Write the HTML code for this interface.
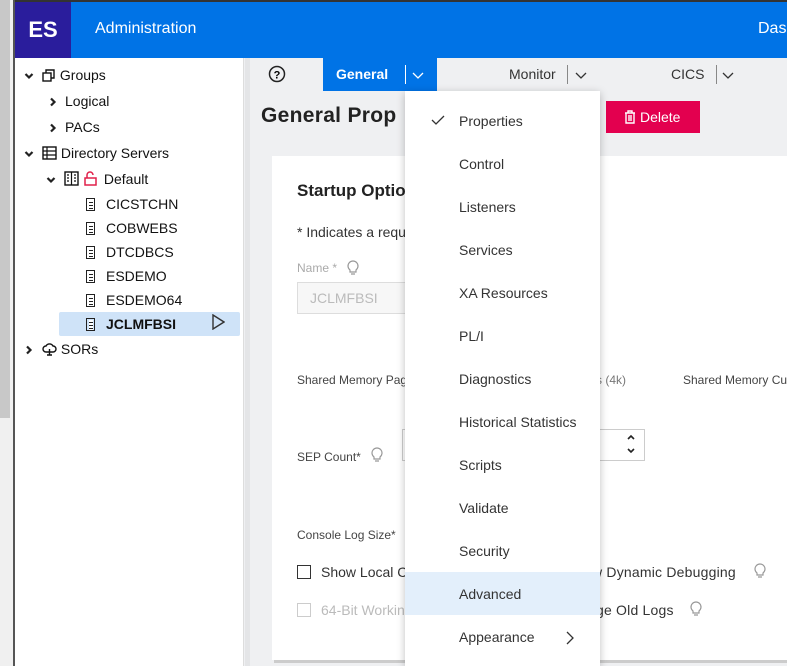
<!DOCTYPE html>
<html><head><style>
*{margin:0;padding:0;box-sizing:border-box}
body{width:787px;height:666px;overflow:hidden;position:relative;font-family:"Liberation Sans",sans-serif;background:#eff0f2;color:#222}
.a{position:absolute}
.tree{font-size:14px;color:#111}
.tree div{position:absolute;white-space:nowrap}
.srv{display:inline-block;width:9px;height:13px;border:1.5px solid #222;vertical-align:-2px;margin-right:11px;background:repeating-linear-gradient(#fff 0 2px,#222 2px 3px);background-size:4px 100%;background-repeat:no-repeat;background-position:2px 1px}
.menu div{position:absolute;left:54px;font-size:14px;color:#333}
.lbl{font-size:12px;color:#444;position:absolute;white-space:nowrap}
</style></head><body>
<div class="a" style="left:0;top:0;width:13px;height:666px;background:#f0f0f0"></div>
<div class="a" style="left:0;top:0;width:10px;height:418px;background:#c8c8c8"></div>
<div class="a" style="left:13px;top:0;width:2px;height:666px;background:#555"></div>
<div class="a" style="left:15px;top:0;width:772px;height:58px;background:#0073e6;border-top:2px solid #333"></div>
<div class="a" style="left:15px;top:2px;width:56px;height:56px;background:#2a1d9c;color:#fff;font-weight:bold;font-size:22px;text-align:center;line-height:56px">ES</div>
<div class="a" style="left:95px;top:20px;color:#fff;font-size:16px">Administration</div>
<div class="a" style="left:758px;top:20px;color:#fff;font-size:16px">Das</div>
<div class="a" style="left:15px;top:58px;width:229px;height:608px;background:#fff;border-right:1px solid #ddd"></div>
<div class="a" style="left:245px;top:58px;width:5px;height:608px;background:#e4e5e7"></div>
<div class="tree">
<svg class="a" style="left:24px;top:72px" width="10" height="8"><path d="M1.5 2l3.5 3.5L8.5 2" fill="none" stroke="#222" stroke-width="2.2"/></svg>
<div style="left:42px;top:67px"><svg width="14" height="14" style="vertical-align:-2px"><rect x="1" y="5" width="8" height="8" fill="none" stroke="#111" stroke-width="1.4"/><path d="M4 5V2h8v8H9" fill="none" stroke="#111" stroke-width="1.4"/></svg> Groups</div>
<svg class="a" style="left:49px;top:97px" width="8" height="10"><path d="M2 1.5l3.5 3.5L2 8.5" fill="none" stroke="#222" stroke-width="2.2"/></svg>
<div style="left:65px;top:93px">Logical</div>
<svg class="a" style="left:49px;top:123px" width="8" height="10"><path d="M2 1.5l3.5 3.5L2 8.5" fill="none" stroke="#222" stroke-width="2.2"/></svg>
<div style="left:65px;top:119px">PACs</div>
<svg class="a" style="left:24px;top:150px" width="10" height="8"><path d="M1.5 2l3.5 3.5L8.5 2" fill="none" stroke="#222" stroke-width="2.2"/></svg>
<div style="left:42px;top:145px"><svg width="15" height="14" style="vertical-align:-2px"><rect x="1" y="1" width="13" height="12" fill="none" stroke="#111" stroke-width="1.4"/><path d="M1 5h13M1 9h13M5 1v12" stroke="#111" stroke-width="1.2"/></svg> Directory Servers</div>
<svg class="a" style="left:46px;top:176px" width="10" height="8"><path d="M1.5 2l3.5 3.5L8.5 2" fill="none" stroke="#222" stroke-width="2.2"/></svg>
<div style="left:64px;top:171px"><svg width="36" height="15" style="vertical-align:-2px"><rect x="1" y="1" width="13" height="13" fill="none" stroke="#111" stroke-width="1.4"/><path d="M7.5 1v13M3 4h2M3 7h2M3 10h2M10 4h2M10 7h2M10 10h2" stroke="#111" stroke-width="1.2"/><rect x="21" y="7" width="11" height="7" fill="none" stroke="#e0204a" stroke-width="1.5"/><path d="M23 7V4a3 3 0 0 1 6 0" fill="none" stroke="#e0204a" stroke-width="1.5"/></svg> Default</div>
<div style="left:86px;top:196px"><span class="srv"></span>CICSTCHN</div>
<div style="left:86px;top:220px"><span class="srv"></span>COBWEBS</div>
<div style="left:86px;top:244px"><span class="srv"></span>DTCDBCS</div>
<div style="left:86px;top:268px"><span class="srv"></span>ESDEMO</div>
<div style="left:86px;top:292px"><span class="srv"></span>ESDEMO64</div>
<div style="left:59px;top:312px;width:181px;height:24px;background:#cfe3f8;border-radius:2px"></div>
<div style="left:86px;top:316px;font-weight:bold"><span class="srv"></span>JCLMFBSI</div>
<div style="left:211px;top:314px"><svg width="14" height="16"><path d="M2 1l11 7-11 7z" fill="none" stroke="#333" stroke-width="1.4"/></svg></div>
<svg class="a" style="left:25px;top:345px" width="8" height="10"><path d="M2 1.5l3.5 3.5L2 8.5" fill="none" stroke="#222" stroke-width="2.2"/></svg>
<div style="left:42px;top:341px"><svg width="15" height="15" style="vertical-align:-2px"><path d="M4 11a3 3 0 0 1 0-6 4 4 0 0 1 7 0 3 3 0 0 1 0 6z M7.5 8v6M5 14h5" fill="none" stroke="#111" stroke-width="1.4"/></svg> SORs</div>
</div>
<div class="a" style="left:268px;top:65px"><svg width="18" height="18"><circle cx="9" cy="9" r="7.5" fill="none" stroke="#222" stroke-width="1.5"/><text x="9" y="13.5" font-size="11" font-weight="bold" text-anchor="middle" font-family="Liberation Sans">?</text></svg></div>
<div class="a" style="left:323px;top:58px;width:114px;height:33px;background:#0073e6"></div>
<div class="a" style="left:336px;top:66px;color:#fff;font-weight:bold;font-size:14px">General</div>
<div class="a" style="left:405px;top:65px;width:1px;height:19px;background:#fff"></div>
<div class="a" style="left:411px;top:67px"><svg width="14" height="10"><path d="M2 3l5 5 5-5" fill="none" stroke="#fff" stroke-width="1.3"/></svg></div>
<div class="a" style="left:509px;top:66px;font-size:14px;color:#333">Monitor</div>
<div class="a" style="left:567px;top:65px;width:1px;height:19px;background:#888"></div>
<div class="a" style="left:574px;top:67px"><svg width="14" height="10"><path d="M2 3l5 5 5-5" fill="none" stroke="#333" stroke-width="1.3"/></svg></div>
<div class="a" style="left:671px;top:66px;font-size:14px;color:#333">CICS</div>
<div class="a" style="left:716px;top:65px;width:1px;height:19px;background:#888"></div>
<div class="a" style="left:721px;top:67px"><svg width="14" height="10"><path d="M2 3l5 5 5-5" fill="none" stroke="#333" stroke-width="1.3"/></svg></div>
<div class="a" style="left:261px;top:104px;font-size:21px;font-weight:bold;color:#222;letter-spacing:0.3px;white-space:nowrap">General Prop</div>
<div class="a" style="left:606px;top:101px;width:94px;height:32px;background:#e3004f;color:#fff;font-size:14px;line-height:32px;padding-left:18px"><svg width="12" height="14" style="vertical-align:-2px;margin-right:4px"><path d="M1 3h10M4 3V1h4v2M2 3v10h8V3M5 5v6M7 5v6" fill="none" stroke="#fff" stroke-width="1.4"/></svg>Delete</div>
<div class="a" style="left:272px;top:156px;width:515px;height:504px;background:#fff"></div>
<div class="a" style="left:274px;top:660px;width:513px;height:3px;background:#ccc"></div>
<div class="a" style="left:297px;top:181px;font-size:17px;font-weight:bold;color:#222;white-space:nowrap">Startup Options</div>
<div class="a" style="left:297px;top:224px;font-size:14px;color:#333;white-space:nowrap">* Indicates a required</div>
<div class="a" style="left:297px;top:261px;font-size:12px;color:#aaa">Name *</div>
<div class="a" style="left:347px;top:259px"><svg width="12" height="17"><path d="M3 11a5 5 0 1 1 6 0v2H3z M4 15h4" fill="none" stroke="#999" stroke-width="1.2"/></svg></div>
<div class="a" style="left:297px;top:282px;width:120px;height:32px;border:1px solid #ddd;background:#f7f7f7;color:#bbb;font-size:14px;line-height:30px;padding-left:12px">JCLMFBSI</div>
<div class="lbl" style="left:297px;top:373px">Shared Memory Pages</div>
<div class="lbl" style="left:596px;top:373px;color:#777">s (4k)</div>
<div class="lbl" style="left:683px;top:373px">Shared Memory Cu</div>
<div class="lbl" style="left:297px;top:450px">SEP Count*</div>
<div class="a" style="left:371px;top:446px"><svg width="12" height="17"><path d="M3 11a5 5 0 1 1 6 0v2H3z M4 15h4" fill="none" stroke="#999" stroke-width="1.2"/></svg></div>
<div class="a" style="left:402px;top:429px;width:243px;height:32px;border:1px solid #ccc"></div>
<svg class="a" style="left:626px;top:434px" width="10" height="24"><path d="M2 5l3-3 3 3M2 15l3 3 3-3" fill="none" stroke="#222" stroke-width="1.6"/></svg>
<div class="lbl" style="left:297px;top:528px">Console Log Size*</div>
<div class="a" style="left:297px;top:565px;width:14px;height:14px;border:1.5px solid #333"></div>
<div class="a" style="left:321px;top:564px;font-size:14px;color:#333">Show Local C</div>
<div class="a" style="left:592px;top:564px;font-size:14px;color:#333;letter-spacing:0.2px">w Dynamic Debugging</div>
<div class="a" style="left:754px;top:562px"><svg width="12" height="17"><path d="M3 11a5 5 0 1 1 6 0v2H3z M4 15h4" fill="none" stroke="#999" stroke-width="1.2"/></svg></div>
<div class="a" style="left:297px;top:603px;width:14px;height:14px;border:1px solid #ccc"></div>
<div class="a" style="left:321px;top:602px;font-size:14px;color:#bbb">64-Bit Workin</div>
<div class="a" style="left:596px;top:602px;font-size:14px;color:#333;letter-spacing:0.2px">ge Old Logs</div>
<div class="a" style="left:690px;top:600px"><svg width="12" height="17"><path d="M3 11a5 5 0 1 1 6 0v2H3z M4 15h4" fill="none" stroke="#999" stroke-width="1.2"/></svg></div>
<div class="a menu" style="left:405px;top:91px;width:195px;height:575px;background:#fff;box-shadow:0 2px 8px rgba(0,0,0,.25)">
<div style="left:0;top:481px;width:195px;height:43px;background:#e3effb"></div>
<svg class="a" style="left:26px;top:23px" width="14" height="12"><path d="M1 6l4 4 8-8" fill="none" stroke="#333" stroke-width="1.3"/></svg>
<div style="top:22px">Properties</div>
<div style="top:65px">Control</div>
<div style="top:108px">Listeners</div>
<div style="top:151px">Services</div>
<div style="top:194px">XA Resources</div>
<div style="top:237px">PL/I</div>
<div style="top:280px">Diagnostics</div>
<div style="top:323px">Historical Statistics</div>
<div style="top:366px">Scripts</div>
<div style="top:409px">Validate</div>
<div style="top:452px">Security</div>
<div style="top:495px">Advanced</div>
<div style="top:538px">Appearance</div>
<svg class="a" style="left:160px;top:540px" width="10" height="14"><path d="M2 1l6 6-6 6" fill="none" stroke="#333" stroke-width="1.3"/></svg>
</div>
</body></html>
